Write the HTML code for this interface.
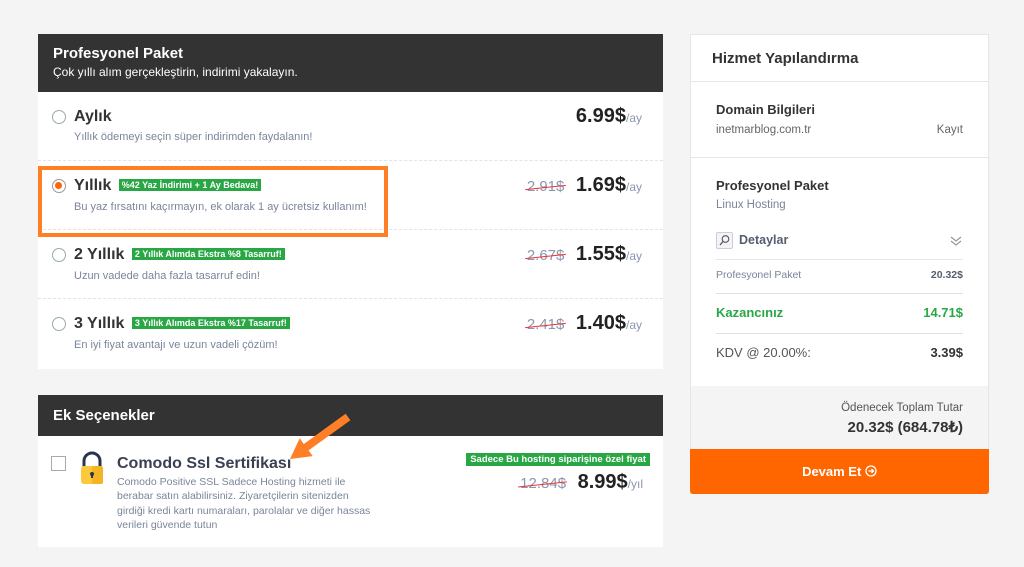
<!DOCTYPE html>
<html><head><meta charset="utf-8"><style>
*{box-sizing:border-box;margin:0;padding:0}
body{width:1024px;height:567px;background:#f4f4f5;font-family:"Liberation Sans",sans-serif;position:relative;overflow:hidden;color:#333}
.abs{position:absolute}
.panel{position:absolute;background:#fff}
.hdr{position:absolute;background:#333;color:#fff}
.row{position:absolute;left:0;width:625px;border-bottom:1px dashed #e3e3e3}
.radio{position:absolute;left:14px;width:14px;height:14px;border:1.5px solid #9aa;border-radius:50%;background:#fff}
.t{position:absolute;left:36px;font-weight:bold;font-size:16px;color:#333}
.d{position:absolute;left:36px;font-size:11px;color:#7a8599}
.tag{display:inline-block;background:#2aa745;color:#fff;font-size:9px;font-weight:bold;padding:1px 3px;vertical-align:2px;margin-left:3px}
.pr{position:absolute;right:21px;font-weight:bold;font-size:20px;color:#222;white-space:nowrap}
.pr small{font-size:12px;font-weight:normal;color:#8a97b0}
.old{font-size:15px;font-weight:normal;color:#8a97b0;position:relative;margin-right:6px}
.old:after{content:"";position:absolute;left:-2px;right:-1px;top:9px;border-top:1.3px solid #e33;transform:rotate(-6deg)}
.rl{position:absolute;left:25px;right:25px;font-size:11px;color:#666}
</style></head><body>

<div class="panel" style="left:38px;top:34px;width:625px;height:335px">
 <div class="hdr" style="left:0;top:0;width:625px;height:58px">
  <div class="abs" style="left:15px;top:11px;font-size:15px;font-weight:bold">Profesyonel Paket</div>
  <div class="abs" style="left:15px;top:31px;font-size:12px">Çok yıllı alım gerçekleştirin, indirimi yakalayın.</div>
 </div>
 <div class="row" style="top:58px;height:69px">
  <div class="radio" style="top:18px"></div>
  <div class="t" style="top:16px">Aylık</div>
  <div class="d" style="top:39px">Yıllık ödemeyi seçin süper indirimden faydalanın!</div>
  <div class="pr" style="top:13px">6.99$<small>/ay</small></div>
 </div>
 <div class="row" style="top:127px;height:69px">
  <div class="radio" style="top:18px;border-color:#999;"><div style="position:absolute;left:2px;top:2px;width:7px;height:7px;border-radius:50%;background:#f60"></div></div>
  <div class="t" style="top:16px">Yıllık <span class="tag">%42 Yaz İndirimi + 1 Ay Bedava!</span></div>
  <div class="d" style="top:40px">Bu yaz fırsatını kaçırmayın, ek olarak 1 ay ücretsiz kullanım!</div>
  <div class="pr" style="top:13px"><span class="old">2.91$</span> 1.69$<small>/ay</small></div>
 </div>
 <div class="row" style="top:196px;height:69px">
  <div class="radio" style="top:18px"></div>
  <div class="t" style="top:16px">2 Yıllık <span class="tag">2 Yıllık Alımda Ekstra %8 Tasarruf!</span></div>
  <div class="d" style="top:40px">Uzun vadede daha fazla tasarruf edin!</div>
  <div class="pr" style="top:13px"><span class="old">2.67$</span> 1.55$<small>/ay</small></div>
 </div>
 <div class="row" style="top:265px;height:70px;border:none">
  <div class="radio" style="top:18px"></div>
  <div class="t" style="top:16px">3 Yıllık <span class="tag">3 Yıllık Alımda Ekstra %17 Tasarruf!</span></div>
  <div class="d" style="top:40px">En iyi fiyat avantajı ve uzun vadeli çözüm!</div>
  <div class="pr" style="top:13px"><span class="old">2.41$</span> 1.40$<small>/ay</small></div>
 </div>
</div>
<div class="abs" style="left:38px;top:166px;width:350px;height:71px;border:4px solid #ff7f27"></div>

<div class="panel" style="left:38px;top:395px;width:625px;height:152px">
 <div class="hdr" style="left:0;top:0;width:625px;height:41px">
  <div class="abs" style="left:15px;top:12px;font-size:15px;font-weight:bold">Ek Seçenekler</div>
 </div>
 <div class="abs" style="left:13px;top:61px;width:15px;height:15px;border:1.5px solid #aaa"></div>
 <svg class="abs" style="left:40px;top:56px" width="28" height="36" viewBox="0 0 28 36"><path d="M6 16V10a8 8 0 0 1 16 0v6" fill="none" stroke="#2b3450" stroke-width="3"/><rect x="3" y="15" width="22" height="18" rx="3" fill="#fcc93a"/><rect x="14" y="15" width="11" height="18" rx="2" fill="#f4b524"/><circle cx="14" cy="23" r="2" fill="#2b3450"/><rect x="13" y="23" width="2" height="4" fill="#2b3450"/></svg>
 <div class="abs" style="left:79px;top:60px;font-size:16px;font-weight:bold;color:#3a3f52">Comodo Ssl Sertifikası</div>
 <div class="abs" style="left:79px;top:80px;width:260px;font-size:10.5px;line-height:14.3px;color:#7a8599">Comodo Positive SSL Sadece Hosting hizmeti ile berabar satın alabilirsiniz. Ziyaretçilerin sitenizden girdiği kredi kartı numaraları, parolalar ve diğer hassas verileri güvende tutun</div>
 <div class="abs" style="right:13px;top:58px;background:#2aa745;color:#fff;font-size:9.5px;font-weight:bold;padding:1px 4px">Sadece Bu hosting siparişine özel fiyat</div>
 <div class="pr" style="top:76px;right:20px"><span class="old">12.84$</span> 8.99$<small>/yıl</small></div>
</div>
<svg class="abs" style="left:280px;top:407px" width="75" height="60" viewBox="0 0 75 60"><polygon points="65.6,6.8 70.4,13.2 28.6,43.4 32.7,49.1 10,52 19.7,31.3 23.8,37" fill="#ff7f27"/></svg>

<div class="panel" style="left:690px;top:34px;width:299px;height:460px;border:1px solid #e6e6e6">
 <div class="abs" style="left:21px;top:15px;font-size:15px;font-weight:bold;color:#333">Hizmet Yapılandırma</div>
 <div class="abs" style="left:0;top:46px;width:297px;border-top:1px solid #e6e6e6"></div>
 <div class="abs" style="left:25px;top:67px;font-size:13px;font-weight:bold">Domain Bilgileri</div>
 <div class="abs" style="left:25px;top:89px;font-size:11.5px;color:#666">inetmarblog.com.tr</div>
 <div class="abs" style="right:25px;top:89px;font-size:11.5px;color:#666">Kayıt</div>
 <div class="abs" style="left:0;top:122px;width:297px;border-top:1px solid #e6e6e6"></div>
 <div class="abs" style="left:25px;top:143px;font-size:13px;font-weight:bold">Profesyonel Paket</div>
 <div class="abs" style="left:25px;top:164px;font-size:11.5px;color:#7a8599">Linux Hosting</div>
 <div class="abs" style="left:25px;top:197px;width:17px;height:17px;border:1px solid #ccd;border-radius:2px;background:#f2f4f7"><svg width="15" height="15" viewBox="0 0 15 15"><circle cx="8.5" cy="6" r="3.3" fill="none" stroke="#555" stroke-width="1.1"/><path d="M6 8.5L3 12" stroke="#555" stroke-width="1.3"/></svg></div>
 <div class="abs" style="left:48px;top:198px;font-size:12.5px;font-weight:bold;color:#555e70">Detaylar</div>
 <svg class="abs" style="left:258px;top:200px" width="14" height="12" viewBox="0 0 14 12"><path d="M2 2l5 4 5-4M2 6l5 4 5-4" fill="none" stroke="#999" stroke-width="1.2"/></svg>
 <div class="rl" style="top:224px;border-top:1px solid #e6e6e6"></div>
 <div class="rl" style="top:234px;font-size:10.5px;color:#7a8599">Profesyonel Paket<span style="float:right;font-weight:bold;color:#555e70">20.32$</span></div>
 <div class="rl" style="top:258px;border-top:1px solid #e0e0e0"></div>
 <div class="rl" style="top:270px;font-size:13px;font-weight:bold;color:#2aa745">Kazancınız<span style="float:right">14.71$</span></div>
 <div class="rl" style="top:298px;border-top:1px solid #e0e0e0"></div>
 <div class="rl" style="top:310px;font-size:13px;color:#555">KDV @ 20.00%:<span style="float:right;font-weight:bold;color:#333">3.39$</span></div>
 <div class="abs" style="left:0;top:351px;width:297px;height:64px;background:#f4f4f5"></div>
 <div class="abs" style="right:25px;top:367px;font-size:11.5px;color:#555">Ödenecek Toplam Tutar</div>
 <div class="abs" style="right:25px;top:383px;font-size:15px;font-weight:bold;color:#333">20.32$ (684.78₺)</div>
 <div class="abs" style="left:-1px;top:414px;width:299px;height:45px;background:#ff6600;color:#fff;font-size:13px;font-weight:bold;text-align:center;line-height:45px;border-radius:0 0 3px 3px">Devam Et <svg width="12" height="12" viewBox="0 0 12 12" style="vertical-align:-1px"><circle cx="6" cy="6" r="5" fill="none" stroke="#fff" stroke-width="1.3"/><path d="M3.5 6h5M6.5 4l2 2-2 2" fill="none" stroke="#fff" stroke-width="1.3"/></svg></div>
</div>
</body></html>
